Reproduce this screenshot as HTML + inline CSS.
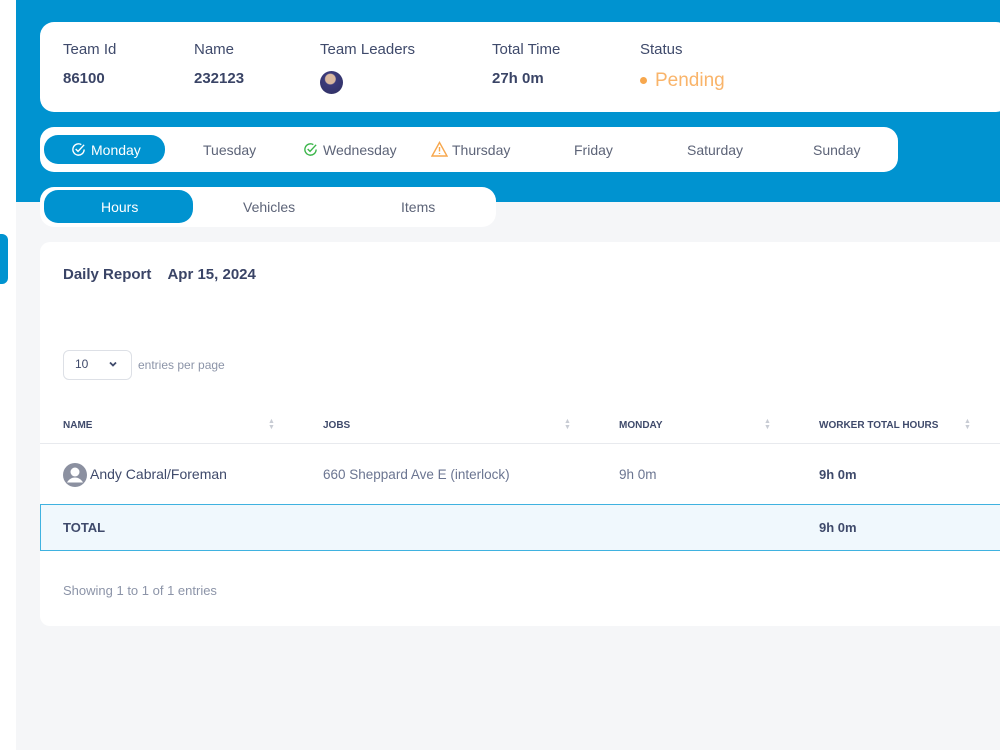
<!DOCTYPE html>
<html><head><style>
*{margin:0;padding:0;box-sizing:border-box}
body{width:1000px;height:750px;overflow:hidden;background:#f5f6f8;font-family:"Liberation Sans",sans-serif;position:relative;color:#3f4a6b}
.side{position:absolute;left:0;top:0;width:16px;height:750px;background:#fff}
.tab{position:absolute;left:0;top:234px;width:8px;height:50px;background:#0093d0;border-radius:0 6px 6px 0}
.band{position:absolute;left:16px;top:0;width:984px;height:202px;background:#0093d0}
.card{position:absolute;background:#fff}
.lbl{position:absolute;font-size:15px;color:#3f4a6b}
.val{position:absolute;font-size:15px;font-weight:bold;color:#3a4466}
.day{position:absolute;top:142px;font-size:14px;color:#5d6478}
.t{position:absolute;font-size:14px;color:#5d6478}
.th{position:absolute;top:420px;font-size:10px;font-weight:bold;color:#3f4a6b}
.sort{position:absolute;top:419px;font-size:7px;color:#c8ccd4;line-height:6px}
</style></head><body>
<div class="side"></div><div class="tab"></div>
<div class="band"></div>
<div class="card" style="left:40px;top:22px;width:970px;height:90px;border-radius:14px"></div>
<div class="lbl" style="left:63px;top:41px">Team Id</div>
<div class="lbl" style="left:194px;top:41px">Name</div>
<div class="lbl" style="left:320px;top:41px">Team Leaders</div>
<div class="lbl" style="left:492px;top:41px">Total Time</div>
<div class="lbl" style="left:640px;top:41px">Status</div>
<div class="val" style="left:63px;top:70px">86100</div>
<div class="val" style="left:194px;top:70px">232123</div>
<div style="position:absolute;left:320px;top:71px;width:23px;height:23px;border-radius:50%;background:radial-gradient(circle at 45% 35%,#d9b8a0 0 25%,#3b3a7a 30%,#2f3060 100%)"></div>
<div class="val" style="left:492px;top:70px">27h 0m</div>
<div style="position:absolute;left:640px;top:77px;width:7px;height:7px;border-radius:50%;background:#f7a74d"></div>
<div style="position:absolute;left:655px;top:70px;font-size:19px;color:#f9b46a">Pending</div>

<div class="card" style="left:40px;top:127px;width:858px;height:45px;border-radius:14px"></div>
<div style="position:absolute;left:44px;top:135px;width:121px;height:29px;border-radius:14px;background:#0093d0"></div>
<svg style="position:absolute;left:71px;top:142px" width="15" height="15" viewBox="0 0 16 16" fill="none" stroke="#fff" stroke-width="1.5"><path d="M14 8a6 6 0 1 1-3-5.2"/><path d="M5 7.5l2.5 2.5L14 3"/></svg>
<div class="day" style="left:91px;color:#fff">Monday</div>
<div class="day" style="left:203px">Tuesday</div>
<svg style="position:absolute;left:303px;top:142px" width="15" height="15" viewBox="0 0 16 16" fill="none" stroke="#3bb54a" stroke-width="1.5"><path d="M14 8a6 6 0 1 1-3-5.2"/><path d="M5 7.5l2.5 2.5L14 3"/></svg>
<div class="day" style="left:323px">Wednesday</div>
<svg style="position:absolute;left:431px;top:141px" width="17" height="16" viewBox="0 0 17 16" fill="none" stroke="#f7a74d" stroke-width="1.4"><path d="M8.5 1.5L16 15H1z"/><path d="M8.5 6v4.5M8.5 12v1"/></svg>
<div class="day" style="left:452px">Thursday</div>
<div class="day" style="left:574px">Friday</div>
<div class="day" style="left:687px">Saturday</div>
<div class="day" style="left:813px">Sunday</div>

<div class="card" style="left:40px;top:187px;width:456px;height:40px;border-radius:14px"></div>
<div style="position:absolute;left:44px;top:190px;width:149px;height:33px;border-radius:14px;background:#0093d0"></div>
<div class="t" style="left:101px;top:199px;color:#fff">Hours</div>
<div class="t" style="left:243px;top:199px">Vehicles</div>
<div class="t" style="left:401px;top:199px">Items</div>

<div class="card" style="left:40px;top:242px;width:970px;height:384px;border-radius:10px"></div>
<div style="position:absolute;left:63px;top:266px;font-size:15px;font-weight:bold;color:#3a4466">Daily Report&nbsp;&nbsp;&nbsp; Apr 15, 2024</div>
<div style="position:absolute;left:63px;top:350px;width:69px;height:30px;border:1px solid #dde0e6;border-radius:6px;background:#fff"></div>
<div style="position:absolute;left:75px;top:357px;font-size:12px;color:#3f4a6b">10</div>
<svg style="position:absolute;left:108px;top:361px" width="10" height="7" viewBox="0 0 10 7"><path d="M2 1.5l3 3 3-3" stroke="#3f4a6b" stroke-width="1.8" fill="none"/></svg>
<div style="position:absolute;left:138px;top:358px;font-size:12px;color:#8c94a8">entries per page</div>

<div class="th" style="left:63px">NAME</div><div class="sort" style="left:268px">▲<br>▼</div>
<div class="th" style="left:323px">JOBS</div><div class="sort" style="left:564px">▲<br>▼</div>
<div class="th" style="left:619px">MONDAY</div><div class="sort" style="left:764px">▲<br>▼</div>
<div class="th" style="left:819px">WORKER TOTAL HOURS</div><div class="sort" style="left:964px">▲<br>▼</div>
<div style="position:absolute;left:40px;top:443px;width:960px;height:1px;background:#e8eaee"></div>
<svg style="position:absolute;left:63px;top:463px" width="24" height="24" viewBox="0 0 24 24"><circle cx="12" cy="12" r="12" fill="#8b90a0"/><circle cx="12" cy="9" r="4.5" fill="#fff"/><path d="M4 19.5c2-3.5 5-5 8-5s6 1.5 8 5" fill="#fff"/></svg>
<div class="t" style="left:90px;top:466px;color:#3f4a6b">Andy Cabral/Foreman</div>
<div class="t" style="left:323px;top:467px;color:#6b7591;font-size:13.5px">660 Sheppard Ave E (interlock)</div>
<div class="t" style="left:619px;top:467px;color:#6b7591;font-size:13.5px">9h 0m</div>
<div class="t" style="left:819px;top:467px;font-weight:bold;color:#3f4a6b;font-size:13px">9h 0m</div>
<div style="position:absolute;left:40px;top:504px;width:970px;height:47px;background:#f0f8fd;border:1px solid #3fb2e0"></div>
<div class="t" style="left:63px;top:520px;font-weight:bold;color:#3f4a6b;font-size:13px">TOTAL</div>
<div class="t" style="left:819px;top:520px;font-weight:bold;color:#3f4a6b;font-size:13px">9h 0m</div>
<div class="t" style="left:63px;top:583px;color:#8c94a8;font-size:13px">Showing 1 to 1 of 1 entries</div>
</body></html>
